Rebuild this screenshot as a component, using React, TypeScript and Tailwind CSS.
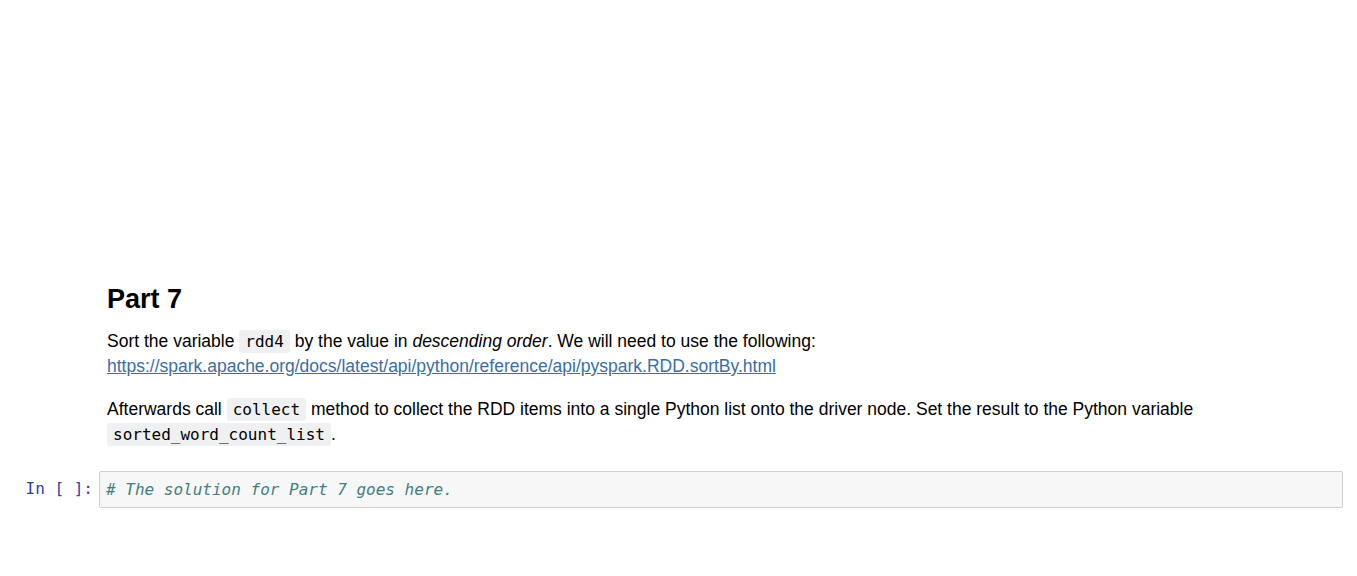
export default function App() {
  const code = "bg-[#eff0f1] rounded-[3px] px-[6px] py-[2px] font-['DejaVu_Sans_Mono',monospace] text-[16px]";
  return (
    <div className="w-[1357px] h-[576px] bg-white font-['Liberation_Sans',Arial,sans-serif] text-black pt-[282px]">
      {/* Markdown cell */}
      <div className="pl-[107px] pr-[20px]">
        <h2 className="text-[27px] font-bold leading-[34px]">Part 7</h2>
        <p className="text-[17.5px] leading-[25px] mt-[13px]">
          Sort the variable <code className={code}>rdd4</code> by the value in <em>descending order</em>. We will need to use the following:
          <br />
          <a href="#" className="text-[#3a6ea5] underline">
            https://spark.apache.org/docs/latest/api/python/reference/api/pyspark.RDD.sortBy.html
          </a>
        </p>
        <p className="text-[17.5px] leading-[25px] mt-[18px]">
          Afterwards call <code className={code}>collect</code> method to collect the RDD items into a single Python list onto the driver node. Set the result to the Python variable
          <br />
          <code className={code}>sorted_word_count_list</code>.
        </p>
      </div>

      {/* Code cell */}
      <div className="flex items-start mt-[24px] pr-[14px]">
        <div className="w-[99px] shrink-0 pr-[6px] text-right pt-[8px] font-['DejaVu_Sans_Mono',monospace] text-[16px] leading-[20px] text-[#303f9f]">
          In&nbsp;[&nbsp;]:
        </div>
        <div className="flex-1 h-[37px] bg-[#f7f7f7] border border-[#cfcfcf] rounded-[2px] px-[6px] pt-[8px] font-['DejaVu_Sans_Mono',monospace] text-[16px] leading-[20px] italic text-[#408080]">
          # The solution for Part 7 goes here.
        </div>
      </div>
    </div>
  );
}
